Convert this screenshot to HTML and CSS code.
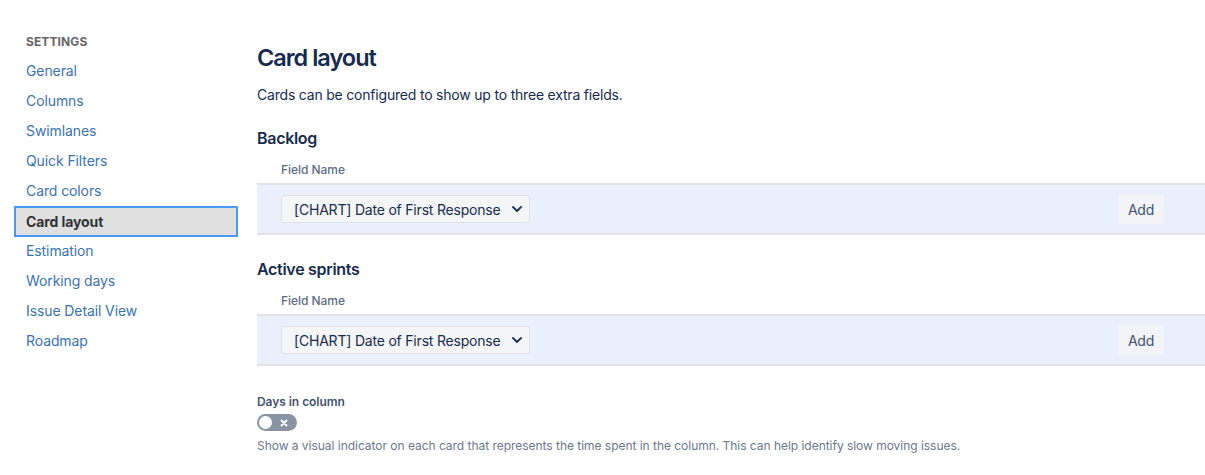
FILE: index.html
```html
<!DOCTYPE html>
<html>
<head>
<meta charset="utf-8">
<link rel="stylesheet" href="styles.css">
</head>
<body>
<div class="page">
  <nav class="sidebar">
    <div class="side-heading">SETTINGS</div>
    <a class="side-link">General</a>
    <a class="side-link">Columns</a>
    <a class="side-link">Swimlanes</a>
    <a class="side-link">Quick Filters</a>
    <a class="side-link">Card colors</a>
    <a class="side-link active">Card layout</a>
    <a class="side-link">Estimation</a>
    <a class="side-link">Working days</a>
    <a class="side-link">Issue Detail View</a>
    <a class="side-link">Roadmap</a>
  </nav>
  <main class="main">
    <h1 class="title">Card layout</h1>
    <p class="desc">Cards can be configured to show up to three extra fields.</p>

    <h2 class="section">Backlog</h2>
    <div class="field-label">Field Name</div>
    <div class="field-row">
      <div class="select">
        <span>[CHART] Date of First Response</span>
        <svg class="chev" width="12" height="8" viewBox="0 0 12 8"><path d="M2 2l4 4 4-4" fill="none" stroke="#253858" stroke-width="2" stroke-linecap="round" stroke-linejoin="round"/></svg>
      </div>
      <div class="btn">Add</div>
    </div>

    <h2 class="section second">Active sprints</h2>
    <div class="field-label">Field Name</div>
    <div class="field-row">
      <div class="select">
        <span>[CHART] Date of First Response</span>
        <svg class="chev" width="12" height="8" viewBox="0 0 12 8"><path d="M2 2l4 4 4-4" fill="none" stroke="#253858" stroke-width="2" stroke-linecap="round" stroke-linejoin="round"/></svg>
      </div>
      <div class="btn">Add</div>
    </div>

    <div class="toggle-label">Days in column</div>
    <div class="toggle">
      <span class="knob"></span>
      <svg class="x" width="8" height="8" viewBox="0 0 8 8"><path d="M1.5 1.5l5 5M6.5 1.5l-5 5" stroke="#fff" stroke-width="1.8" stroke-linecap="round"/></svg>
    </div>
    <div class="help">Show a visual indicator on each card that represents the time spent in the column. This can help identify slow moving issues.</div>
  </main>
</div>
</body>
</html>
```
FILE: styles.css
```css
html, body {
  margin: 0;
  padding: 0;
  background: #fff;
}
body {
  font-family: Inter, "Noto Sans", "Liberation Sans", sans-serif;
  font-size: 14px;
  color: #172b4d;
  letter-spacing: -0.2px;
}
.page {
  display: flex;
}
.sidebar {
  width: 224px;
  padding: 34px 0 0 14px;
  display: flex;
  flex-direction: column;
  flex-shrink: 0;
}
.side-heading {
  font-size: 12px;
  line-height: 16px;
  font-weight: 700;
  color: #666;
  padding-left: 12px;
  margin-bottom: 6px;
  letter-spacing: 0.1px;
}
.side-link {
  display: block;
  box-sizing: border-box;
  height: 30px;
  line-height: 26px;
  padding-left: 10px;
  border: 2px solid transparent;
  color: #3b73af;
  font-size: 14px;
  text-decoration: none;
  letter-spacing: -0.1px;
}
.side-link.active {
  background: #e0e0e0;
  border-color: #4a9af5;
  color: #333;
  font-weight: 700;
  height: 31px;
  line-height: 27px;
  margin-bottom: -1px;
}
.main {
  flex: 1;
  margin-left: 19px;
  padding-top: 44px;
}
.title {
  margin: 0;
  font-size: 23.5px;
  line-height: 28px;
  font-weight: 600;
  color: #172b4d;
  letter-spacing: -1px;
}
.desc {
  margin: 13px 0 0;
  line-height: 20px;
}
.section {
  margin: 23px 0 0;
  font-size: 16px;
  line-height: 20px;
  font-weight: 600;
  color: #172b4d;
  letter-spacing: -0.3px;
}
.section.second {
  margin-top: 24px;
}
.field-label {
  margin: 14px 0 0 24px;
  font-size: 12px;
  line-height: 16px;
  font-weight: 500;
  color: #5e6c84;
  letter-spacing: -0.05px;
}
.field-row {
  margin-top: 5px;
  height: 48px;
  background: #e9f0fb;
  border-top: 2px solid #dfe1e6;
  border-bottom: 2px solid #dfe1e6;
  display: flex;
  align-items: center;
  justify-content: space-between;
  padding: 0 41px 0 24px;
}
.select {
  box-sizing: border-box;
  width: 249px;
  height: 28px;
  background: #f4f5f7;
  border: 1px solid #dfe1e6;
  border-radius: 3px;
  display: flex;
  align-items: center;
  justify-content: space-between;
  padding: 0 6px 0 12px;
  font-size: 14px;
  color: #172b4d;
}
.chev {
  display: block;
}
.btn {
  box-sizing: border-box;
  width: 46px;
  height: 30px;
  background: #f2f4f8;
  border-radius: 3px;
  display: flex;
  align-items: center;
  justify-content: center;
  color: #42526e;
  font-size: 14px;
}
.toggle-label {
  margin-top: 28px;
  font-size: 12px;
  line-height: 16px;
  font-weight: 600;
  color: #42526e;
  letter-spacing: -0.05px;
}
.toggle {
  margin-top: 4px;
  width: 40px;
  height: 17px;
  border-radius: 9px;
  background: #8993a4;
  display: flex;
  align-items: center;
  justify-content: space-between;
  padding: 0 9px 0 2px;
  box-sizing: border-box;
}
.knob {
  width: 13px;
  height: 13px;
  border-radius: 50%;
  background: #fff;
}
.x {
  display: block;
}
.help {
  margin-top: 7px;
  font-size: 12px;
  line-height: 16px;
  color: #6b778c;
  letter-spacing: -0.03px;
}
```
